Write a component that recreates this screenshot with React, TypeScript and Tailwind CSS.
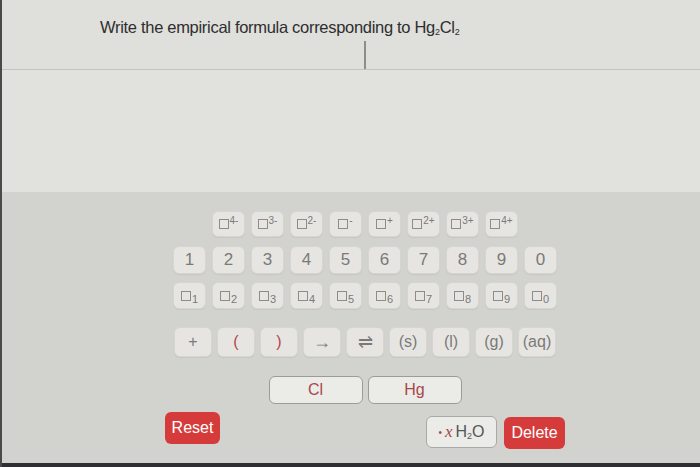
import React from 'react';

const sups = ['4-', '3-', '2-', '-', '+', '2+', '3+', '4+'];
const digits = ['1', '2', '3', '4', '5', '6', '7', '8', '9', '0'];
const subs = ['1', '2', '3', '4', '5', '6', '7', '8', '9', '0'];

function Box() {
  return <span className="inline-block w-[10px] h-[10px] border border-[#8c8c8a]" />;
}

const keyCls =
  'flex items-center justify-center rounded-[6px] bg-[#e6e5e2] border border-[#d6d5d2] shadow-[0_1px_1px_rgba(0,0,0,0.06)] text-[#7a7a78]';

export default function App() {
  return (
    <div
      className="w-[700px] h-[467px] flex flex-col bg-[#dcdcd9] border-l-2 border-[#4a4a4a] overflow-hidden"
      style={{ fontFamily: '"Liberation Sans", Arial, sans-serif' }}
    >
      {/* question + answer */}
      <div className="h-[70px] flex flex-col bg-[#dfdfdc] border-b border-[#c3c3bf]">
        <div className="pl-[98px] pt-[19px] text-[16.5px] text-[#2e2e2e] tracking-[-0.3px] leading-none">
          Write the empirical formula corresponding to Hg
          <sub className="text-[9px]">2</sub>Cl<sub className="text-[9px]">2</sub>
        </div>
        <div className="flex-1 flex pl-[362px] pt-[5px]">
          <div className="w-[1.5px] h-full bg-[#8d8d8b]" />
        </div>
      </div>
      <div className="h-[122px] bg-[#e1e1de]" />

      {/* keypad */}
      <div className="flex-1 bg-[#d2d2cf] flex flex-col">
        <div className="w-[400px] ml-[163px] flex flex-col">
          <div className="mt-[19px] flex justify-center gap-[6px]">
            {sups.map((s) => (
              <div key={s} className={`${keyCls} w-[33px] h-[26px] gap-[1px]`}>
                <Box />
                <span className="text-[10px] -mt-[7px]">{s}</span>
              </div>
            ))}
          </div>
          <div className="mt-[9px] flex justify-center gap-[6px]">
            {digits.map((d) => (
              <div key={d} className={`${keyCls} w-[33px] h-[28px] text-[17px]`}>
                {d}
              </div>
            ))}
          </div>
          <div className="mt-[8px] flex justify-center gap-[6px]">
            {subs.map((s) => (
              <div key={s} className={`${keyCls} w-[33px] h-[27px] gap-[1px]`}>
                <Box />
                <span className="text-[11px] mt-[7px]">{s}</span>
              </div>
            ))}
          </div>
          <div className="mt-[18px] flex justify-center gap-[5px] text-[16px]">
            <div className={`${keyCls} w-[38px] h-[30px]`}>+</div>
            <div className={`${keyCls} w-[38px] h-[30px] border-[#8f8f8d] text-[#b0494a]`}>(</div>
            <div className={`${keyCls} w-[38px] h-[30px] border-[#8f8f8d] text-[#b0494a]`}>)</div>
            <div className={`${keyCls} w-[38px] h-[30px] text-[18px]`}>→</div>
            <div className={`${keyCls} w-[38px] h-[30px] text-[18px]`}>⇌</div>
            <div className={`${keyCls} w-[38px] h-[30px] text-[#6f6f6d]`}>(s)</div>
            <div className={`${keyCls} w-[38px] h-[30px] text-[#6f6f6d]`}>(l)</div>
            <div className={`${keyCls} w-[38px] h-[30px] text-[#6f6f6d]`}>(g)</div>
            <div className={`${keyCls} w-[38px] h-[30px] text-[#6f6f6d]`}>(aq)</div>
          </div>
          <div className="mt-[19px] flex justify-center gap-[5px] text-[16px]">
            <div className="w-[94px] h-[28px] flex items-center justify-center rounded-[6px] bg-[#ebebe8] border border-[#9b9b99] text-[#a8484a]">
              Cl
            </div>
            <div className="w-[94px] h-[28px] flex items-center justify-center rounded-[6px] bg-[#ebebe8] border border-[#9b9b99] text-[#a8484a]">
              Hg
            </div>
          </div>
          <div className="mt-[8px] flex items-start">
            <div className="w-[55px] h-[32px] flex items-center justify-center rounded-[6px] bg-[#d63b3c] text-white text-[16px]">
              Reset
            </div>
            <div className="ml-auto mt-[4px] w-[71px] h-[32px] flex items-center justify-center gap-[3px] rounded-[6px] bg-[#ebebe8] border border-[#a9a9a7] text-[16px] text-[#555]">
              <span className="text-[#a8484a] text-[10px]">•</span>
              <span className="text-[#a8484a] italic text-[17px]" style={{ fontFamily: '"Liberation Serif", serif' }}>
                x
              </span>
              <span>
                H<sub className="text-[9px]">2</sub>O
              </span>
            </div>
            <div className="ml-[7px] mt-[5px] w-[61px] h-[32px] flex items-center justify-center rounded-[6px] bg-[#d63b3c] text-white text-[16px]">
              Delete
            </div>
          </div>
        </div>
      </div>
      <div className="h-[4px] bg-[#2f2f33]" />
    </div>
  );
}
